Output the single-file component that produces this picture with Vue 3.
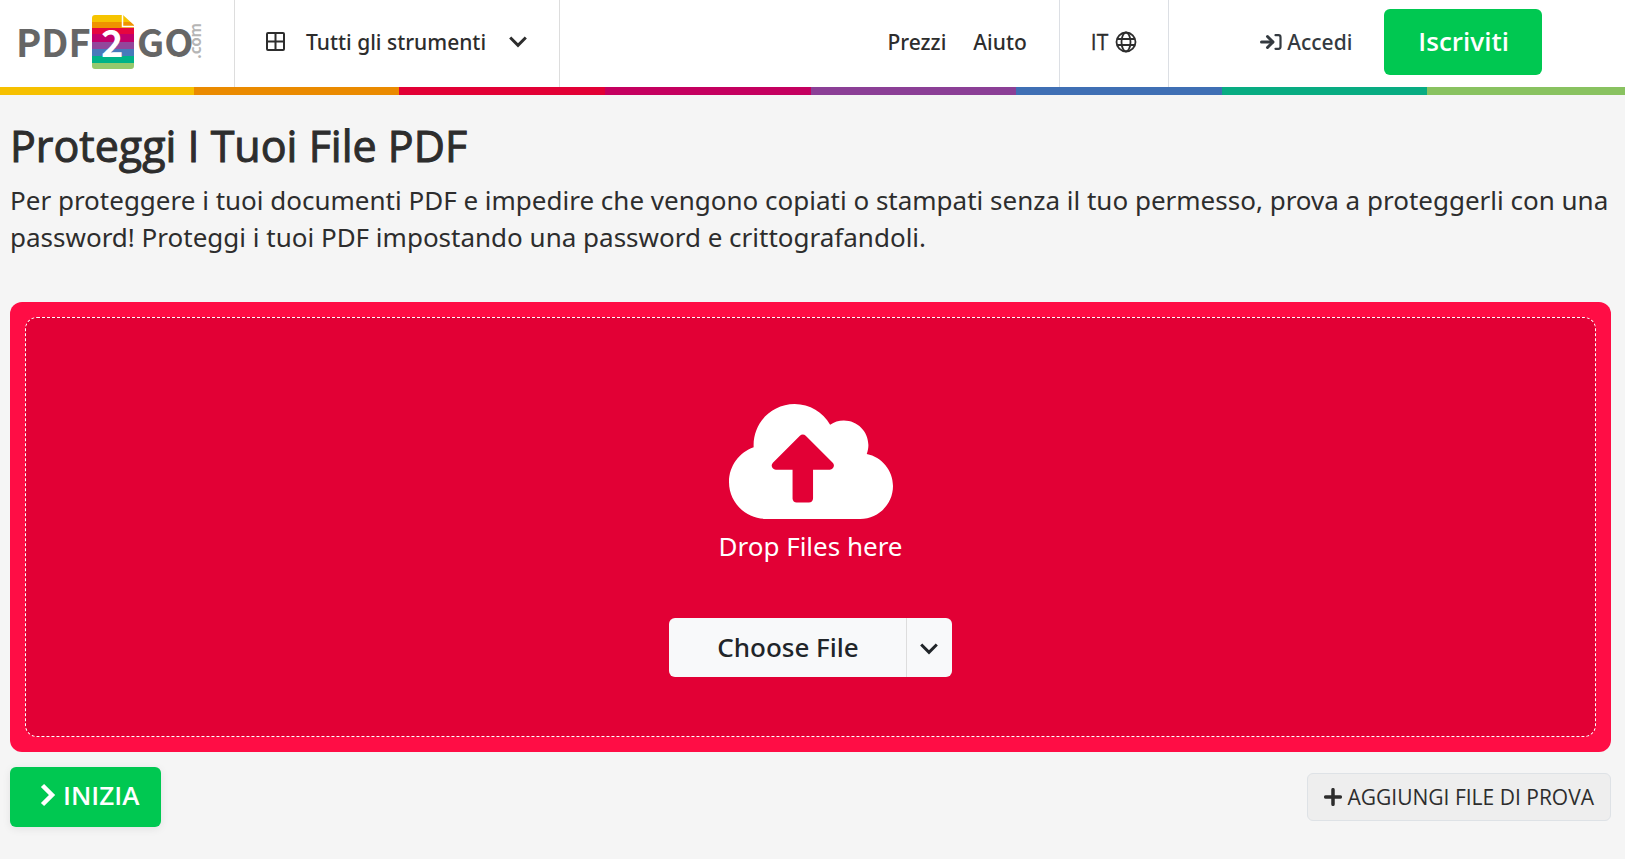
<script setup>
const stripes = ['#f6c000', '#ea8a00', '#e20035', '#c4005f', '#8b3f96', '#3f6fb4', '#08ac82', '#89c260']
</script>

<template>
  <header class="header">
    <nav class="navbar">
      <a href="#" class="logo">
        <svg width="192" height="60" viewBox="0 0 192 60" role="img" aria-label="PDF2GO.com">
          <defs>
            <clipPath id="sheet">
              <path d="M85 3h27v11h12v40q0 3-3 3H85q-3 0-3-3V6q0-3 3-3z" />
              <path d="M113 3l11 10v1h-11z" />
            </clipPath>
          </defs>
          <g clip-path="url(#sheet)">
            <rect x="82" y="3" width="42" height="7" fill="#f6c400" />
            <rect x="82" y="10" width="42" height="6" fill="#ef9300" />
            <rect x="82" y="16" width="42" height="6" fill="#e6063f" />
            <rect x="82" y="22" width="42" height="8" fill="#c2006b" />
            <rect x="82" y="30" width="42" height="7" fill="#92479b" />
            <rect x="82" y="37" width="42" height="7" fill="#477abb" />
            <rect x="82" y="44" width="42" height="7" fill="#00b388" />
            <rect x="82" y="51" width="42" height="7" fill="#95c96d" />
          </g>
          <path d="M112.500 3v11.500H124" fill="none" stroke="#fff" stroke-width="1.500" />
          <text x="6" y="45" class="logo-text">PDF</text>
          <text x="91" y="45" class="logo-num">2</text>
          <text x="127" y="45" class="logo-text">GO</text>
          <text transform="translate(191 47) rotate(-90)" class="logo-com">.com</text>
        </svg>
      </a>

      <button class="tools">
        <svg class="grid-icon" width="20" height="20" viewBox="0 0 20 20" fill="none" stroke="currentColor" stroke-width="2">
          <rect x="1" y="1" width="17" height="17" rx="1" />
          <path d="M9.500 1v17M1 9.500h17" />
        </svg>
        Tutti gli strumenti
        <svg class="chevron" width="18" height="12" viewBox="0 0 18 12" fill="none" stroke="currentColor" stroke-width="3">
          <path d="M1.200 1.500 9 9.300l7.800-7.800" />
        </svg>
      </button>

      <div class="links">
        <a href="#">Prezzi</a>
        <a href="#">Aiuto</a>
      </div>

      <button class="lang">
        IT
        <svg width="22" height="22" viewBox="0 0 22 22" fill="none" stroke="currentColor" stroke-width="1.800">
          <circle cx="11" cy="11" r="9.500" />
          <ellipse cx="11" cy="11" rx="4.500" ry="9.500" />
          <path d="M2 8h18M2 14h18" />
        </svg>
      </button>

      <div class="account">
        <a href="#" class="login">
          <svg width="22" height="16" viewBox="0 0 22 16" fill="none" stroke="currentColor" stroke-linecap="round" stroke-linejoin="round">
            <path d="M1.500 8h11" stroke-width="3" />
            <path d="M7.500 2.500 13 8l-5.500 5.500" stroke-width="3" />
            <path d="M15.500 1.200h3q2 0 2 2v9.600q0 2-2 2h-3" stroke-width="2.200" />
          </svg>
          Accedi
        </a>
        <a href="#" class="signup">Iscriviti</a>
      </div>
    </nav>
    <div class="stripes">
      <span v-for="color in stripes" :key="color" :style="{ background: color }"></span>
    </div>
  </header>

  <main class="content">
    <h1>Proteggi I Tuoi File PDF</h1>
    <p class="intro">
      Per proteggere i tuoi documenti PDF e impedire che vengono copiati o stampati senza il tuo permesso, prova a
      proteggerli con una password! Proteggi i tuoi PDF impostando una password e crittografandoli.
    </p>

    <section class="uploader">
      <div class="dropzone">
        <svg class="cloud" width="164" height="115" viewBox="0 32 640 448" fill="#fff">
          <path
            d="M537.6 226.6c4.1-10.7 6.4-22.4 6.4-34.6 0-53-43-96-96-96-19.700 0-38.100 6-53.300 16.200C367 64.200 315.300 32 256 32c-88.400 0-160 71.600-160 160 0 2.700.1 5.400.2 8.100C40.200 219.800 0 273.200 0 336c0 79.500 64.500 144 144 144h368c70.700 0 128-57.300 128-128 0-61.900-44-113.600-102.400-125.400zM393.400 288H328v112c0 8.800-7.200 16-16 16h-48c-8.800 0-16-7.200-16-16V288h-65.400c-14.300 0-21.400-17.200-11.300-27.300l105.400-105.400c6.200-6.200 16.400-6.200 22.600 0l105.400 105.400c10.100 10.100 2.900 27.300-11.300 27.300z"
          />
        </svg>
        <p class="drop-text">Drop Files here</p>
        <div class="chooser">
          <button class="choose">Choose File</button>
          <button class="choose-more" aria-label="More sources">
            <svg width="18" height="12" viewBox="0 0 18 12" fill="none" stroke="currentColor" stroke-width="3">
              <path d="M1.200 1.500 9 9.300l7.800-7.800" />
            </svg>
          </button>
        </div>
      </div>
    </section>

    <div class="actions">
      <button class="start">
        <svg width="16" height="24" viewBox="0 0 16 24" fill="none" stroke="currentColor" stroke-width="4.500">
          <path d="M2.500 2.500 12 12l-9.500 9.500" />
        </svg>
        INIZIA
      </button>
      <button class="sample">
        <svg width="18" height="18" viewBox="0 0 18 18" fill="none" stroke="currentColor" stroke-width="3.500" stroke-linecap="round">
          <path d="M9 1.700v14.600M1.700 9h14.600" />
        </svg>
        AGGIUNGI FILE DI PROVA
      </button>
    </div>
  </main>
</template>

<style>
body {
  margin: 0;
  background: #f5f5f5;
  color: #2d2d2d;
  font-family: 'Open Sans', 'Noto Sans', sans-serif;
}
</style>

<style scoped>
a {
  color: inherit;
  text-decoration: none;
}

button {
  margin: 0;
  padding: 0;
  border: none;
  background: none;
  color: inherit;
  font-family: inherit;
  cursor: pointer;
}

svg {
  flex: none;
}

.header {
  background: #fff;
  overflow: hidden;
}

.navbar {
  display: flex;
  height: 87px;
  padding-right: 83px;
  font-family: 'Noto Sans', sans-serif;
  font-size: 21px;
  font-weight: 500;
}

.logo {
  display: flex;
  align-items: flex-start;
  padding: 12px 32px 0 10px;
}

.logo svg {
  display: block;
  overflow: visible;
}

.logo-text,
.logo-num {
  font: bold 38px 'Noto Sans CJK SC', sans-serif;
  fill: #666;
}

.logo-num {
  fill: #fff;
}

.logo-com {
  font: bold 15px 'Noto Sans CJK SC', sans-serif;
  fill: #b5b5b5;
}

.tools {
  display: flex;
  align-items: center;
  padding: 0 32px 3px 31px;
  border-left: 1px solid #ddd;
  border-right: 1px solid #ddd;
  font-size: 21px;
  font-weight: 500;
}

.grid-icon {
  margin-right: 20px;
}

.chevron {
  margin-left: 23px;
}

.links {
  display: flex;
  align-items: center;
  gap: 27px;
  margin-left: auto;
  padding: 0 32px 3px 0;
}

.lang {
  display: flex;
  align-items: center;
  gap: 7px;
  padding: 0 31px 3px;
  border-left: 1px solid #dcdfe4;
  border-right: 1px solid #dcdfe4;
  font-family: 'Open Sans', sans-serif;
  font-size: 21px;
  -webkit-text-stroke: 0.3px;
}

.account {
  display: flex;
  align-items: center;
  gap: 32px;
  padding: 0 0 3px 91px;
}

.login {
  display: flex;
  align-items: center;
  gap: 5px;
  color: #343a40;
}

.signup {
  padding: 0 33px 2px 34px;
  border-radius: 6px;
  background: #00c851;
  color: #fff;
  font-family: 'Open Sans', sans-serif;
  font-size: 26px;
  font-weight: 600;
  line-height: 64px;
}

.stripes {
  display: flex;
  height: 8px;
  margin: 0 -8px 0 -12px;
}

.stripes span {
  flex: 1;
}

.content {
  padding: 25px 14px 32px 10px;
}

h1 {
  margin: 0;
  font-size: 43px;
  font-weight: 400;
  line-height: 52px;
  -webkit-text-stroke: 1px;
}

.intro {
  margin: 10px 0 46px;
  font-family: 'Noto Sans', sans-serif;
  font-size: 26px;
  line-height: 37px;
}

.uploader {
  padding: 15px;
  border-radius: 12px;
  background: #ff0d45;
}

.dropzone {
  display: flex;
  flex-direction: column;
  align-items: center;
  padding: 86px 20px 59px;
  border: 1px dashed #fff;
  border-radius: 12px;
  background: #e20035;
}

.drop-text {
  margin: 9px 0 53px;
  color: #fff;
  font-family: 'Noto Sans', sans-serif;
  font-size: 26px;
  line-height: 37px;
}

.chooser {
  display: flex;
  height: 59px;
  border-radius: 6px;
  background: #f8f9fa;
  color: #212529;
}

.choose {
  padding: 0 47px 2px 48px;
  font-family: 'Noto Sans', sans-serif;
  font-size: 26px;
  font-weight: 500;
}

.choose-more {
  display: flex;
  align-items: center;
  padding: 2px 14px 0 13px;
  border-left: 1px solid #ddd;
}

.actions {
  display: flex;
  align-items: center;
  justify-content: space-between;
  margin-top: 15px;
}

.start {
  display: flex;
  align-items: center;
  gap: 7px;
  height: 60px;
  padding: 0 22px 4px 30px;
  border-radius: 6px;
  background: #00c851;
  box-shadow: 0 2px 8px rgba(0, 0, 0, 0.08);
  color: #fff;
  font-size: 26px;
  font-weight: 600;
}

.sample {
  display: flex;
  align-items: center;
  gap: 6px;
  height: 48px;
  padding: 0 16px;
  border: 1px solid #dee2e6;
  border-radius: 6px;
  background: #eee;
  font-size: 21px;
}
</style>
